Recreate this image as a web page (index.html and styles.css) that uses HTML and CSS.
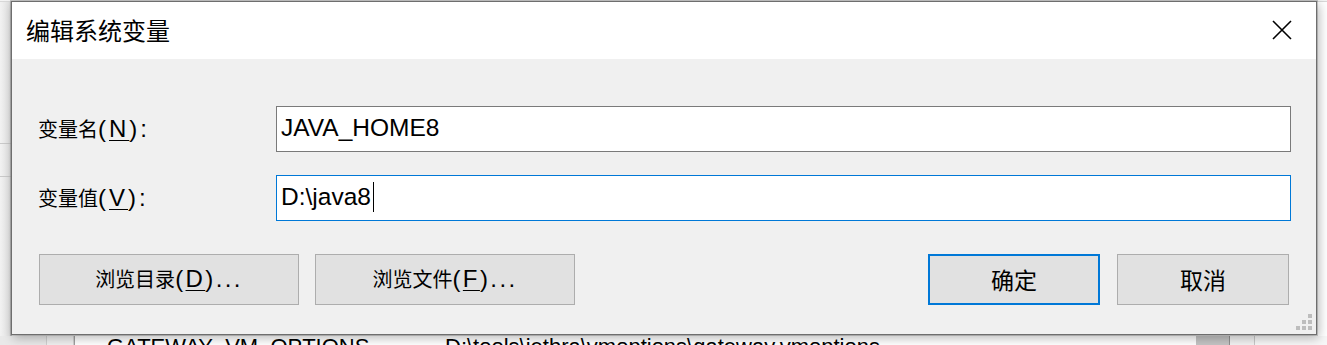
FILE: index.html
```html
<!DOCTYPE html>
<html lang="zh-CN">
<head>
<meta charset="utf-8">
<title>编辑系统变量</title>
<link rel="stylesheet" href="styles.css">
</head>
<body>
<div class="desktop">
  <div class="behind">
    <div class="behind-top"></div>
    <div class="behind-mid">
      <div class="behind-gutter">
        <div class="gline g1"></div>
        <div class="gline g2"></div>
      </div>
    </div>
    <div class="behind-row">
      <div class="cell c0"></div>
      <div class="cell c1"></div>
      <div class="cell c2"></div>
      <div class="cell name">GATEWAY_VM_OPTIONS</div>
      <div class="cell path">D:\tools\jetbra\vmoptions\gateway.vmoptions</div>
      <div class="cell c3"></div>
      <div class="cell c4"></div>
      <div class="cell c5"></div>
    </div>
  </div>

  <div class="dialog">
    <div class="titlebar">
      <div class="title">编辑系统变量</div>
      <div class="close">
        <svg width="20" height="20" viewBox="0 0 20 20"><path d="M1 1 L19 19 M19 1 L1 19" stroke="#000" stroke-width="1.6" fill="none"/></svg>
      </div>
    </div>
    <div class="body">
      <div class="form">
        <div class="label">变量名<span class="lat">(<u>N</u>):</span></div>
        <div class="field">JAVA_HOME8</div>
        <div class="label">变量值<span class="lat">(<u>V</u>):</span></div>
        <div class="field focused">D:\java8<span class="caret"></span></div>
      </div>
      <div class="buttons">
        <div class="btn wide">浏览目录<span class="lat">(<u>D</u>)...</span></div>
        <div class="btn wide">浏览文件<span class="lat">(<u>F</u>)...</span></div>
        <div class="spacer"></div>
        <div class="btn default">确定</div>
        <div class="btn">取消</div>
      </div>
    </div>
    <div class="grip">
      <span></span><span></span><span class="on"></span>
      <span></span><span class="on"></span><span class="on"></span>
      <span class="on"></span><span class="on"></span><span class="on"></span>
    </div>
  </div>
</div>
</body>
</html>
```
FILE: styles.css
```css
* { box-sizing: border-box; }
html, body { margin: 0; padding: 0; }
body {
  width: 1327px;
  height: 345px;
  overflow: hidden;
  background: #ffffff;
  font-family: "Noto Sans CJK SC", "Noto Sans", sans-serif;
}
.desktop {
  position: relative;
  width: 1327px;
  height: 345px;
  overflow: hidden;
}
.behind {
  display: flex;
  flex-direction: column;
  height: 345px;
}
.behind-top {
  height: 2px;
  background: #f4f4f4;
  border-bottom: 1px solid #d8d8d8;
}
.behind-mid {
  flex: 1;
  display: flex;
}
.behind-gutter {
  width: 12px;
  background: linear-gradient(to right, #f2f2f2, #e4e4e4 70%, #cfcfcf);
  padding-top: 141px;
}
.gline { height: 1px; background: #c9c9c9; }
.g2 { margin-top: 32px; }
.behind-row {
  height: 9px;
  display: flex;
  background: #ffffff;
}
.cell {
  height: 9px;
  font-family: "Liberation Sans", Arial, sans-serif;
  font-size: 22px;
  line-height: 22px;
  color: #000;
  white-space: nowrap;
  overflow: hidden;
}
.c0 { width: 47px; background: #e9e9e9; border-right: 1px solid #d0d0d0; }
.c1 { width: 27px; background: #f0f0f0; border-right: 1px solid #d0d0d0; }
.c2 { width: 33px; border-left: 1px solid #a0a0a0; }
.name { width: 338px; }
.path { width: 751px; }
.c3 { width: 34px; background: #c4c4c4; border-right: 1px solid #909090; }
.c4 { width: 25px; background: #f2f2f2; border-right: 1px solid #c8c8c8; }
.c5 { flex: 1; background: #f7f7f7; }

.dialog {
  position: absolute;
  left: 11px;
  top: 1px;
  width: 1306px;
  height: 334px;
  border: 1px solid #6e6e6e;
  box-shadow: 0 0 0 1px rgba(0,0,0,0.18), 2px 3px 10px rgba(0,0,0,0.28);
  background: #f0f0f0;
  display: flex;
  flex-direction: column;
}
.titlebar {
  height: 57px;
  background: #ffffff;
  display: flex;
  align-items: center;
}
.title {
  flex: 1;
  padding-left: 14px;
  font-size: 24px;
  color: #000;
  line-height: 1;
  padding-bottom: 2px;
}
.close {
  width: 68px;
  height: 57px;
  display: flex;
  align-items: center;
  justify-content: center;
  padding-bottom: 1px;
}
.body {
  flex: 1;
  padding: 47px 25px 0 26px;
}
.form {
  display: grid;
  grid-template-columns: 238px 1fr;
  row-gap: 23px;
  align-items: center;
}
.label {
  font-size: 20px;
  color: #000;
  line-height: 1;
  white-space: nowrap;
}
.lat {
  font-family: "Liberation Sans", Arial, sans-serif;
  font-size: 24px;
  letter-spacing: 3px;
}
.btn .lat { letter-spacing: 2.4px; }
.lat u { text-decoration-thickness: 1px; text-underline-offset: 3px; }
.field {
  height: 46px;
  background: #ffffff;
  border: 1px solid #7a7a7a;
  padding-left: 4px;
  display: flex;
  align-items: center;
  font-family: "Liberation Sans", Arial, sans-serif;
  font-size: 24.5px;
  color: #000;
  padding-bottom: 3px;
}
.field.focused { border-color: #0078d7; }
.caret {
  display: inline-block;
  width: 1px;
  height: 30px;
  background: #000;
  margin-left: 2px;
}
.buttons {
  display: flex;
  margin-top: 33px;
  padding-left: 1px;
  padding-right: 2px;
}
.btn {
  width: 172px;
  height: 51px;
  background: #e1e1e1;
  border: 1px solid #adadad;
  display: flex;
  align-items: center;
  justify-content: center;
  font-size: 20px;
  color: #000;
  padding-bottom: 2px;
  white-space: nowrap;
}
.btn.wide { width: 260px; }
.btn.wide + .btn.wide { margin-left: 16px; }
.btn.default { border: 2px solid #0078d7; margin-right: 17px; font-size: 23px; }
.btn:last-child { font-size: 23px; }
.spacer { flex: 1; }
.grip {
  position: absolute;
  right: 4px;
  bottom: 4px;
  display: grid;
  grid-template-columns: repeat(3, 4px);
  grid-template-rows: repeat(3, 4px);
  gap: 2px;
}
.grip span.on { background: #bdbdbd; }
```
